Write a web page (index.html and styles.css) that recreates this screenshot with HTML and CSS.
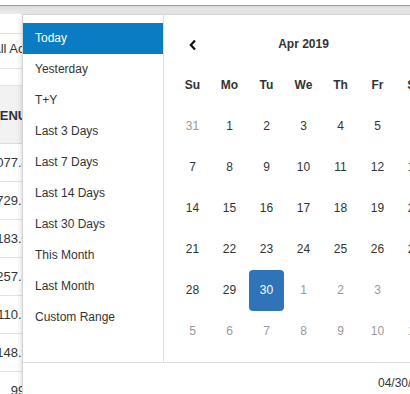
FILE: index.html
```html
<!DOCTYPE html>
<html lang="en">

<head>
    <meta charset="UTF-8">
    <title>Date Range</title>
    <link rel="stylesheet" href="styles.css">
</head>

<body>
    <div class="topbar"></div>

    <div class="page">
        <div class="row-top"></div>
        <div class="row-filter">All Accounts</div>
        <div class="row-gap"></div>
        <div class="row-head">REVENUE</div>
        <div class="row">1077.42</div>
        <div class="row">1729.18</div>
        <div class="row">1183.60</div>
        <div class="row">1257.05</div>
        <div class="row">1110.37</div>
        <div class="row">1148.90</div>
        <div class="row">99.2</div>
    </div>

    <div class="picker">
        <div class="picker-body">
            <ul class="ranges">
                <li class="active">Today</li>
                <li>Yesterday</li>
                <li>T+Y</li>
                <li>Last 3 Days</li>
                <li>Last 7 Days</li>
                <li>Last 14 Days</li>
                <li>Last 30 Days</li>
                <li>This Month</li>
                <li>Last Month</li>
                <li>Custom Range</li>
            </ul>
            <div class="calendar">
                <div class="cal-row">
                    <div class="cell prev">
                        <svg width="10" height="12" viewBox="0 0 10 12">
                            <path d="M7 1.5 L2.8 6 L7 10.5" fill="none" stroke="#111" stroke-width="2.2" />
                        </svg>
                    </div>
                    <div class="month">Apr 2019</div>
                    <div class="cell"></div>
                </div>
                <div class="cal-row week">
                    <div class="cell">Su</div>
                    <div class="cell">Mo</div>
                    <div class="cell">Tu</div>
                    <div class="cell">We</div>
                    <div class="cell">Th</div>
                    <div class="cell">Fr</div>
                    <div class="cell">Sa</div>
                </div>
                <div class="cal-row">
                    <div class="cell off">31</div>
                    <div class="cell">1</div>
                    <div class="cell">2</div>
                    <div class="cell">3</div>
                    <div class="cell">4</div>
                    <div class="cell">5</div>
                    <div class="cell">6</div>
                </div>
                <div class="cal-row">
                    <div class="cell">7</div>
                    <div class="cell">8</div>
                    <div class="cell">9</div>
                    <div class="cell">10</div>
                    <div class="cell">11</div>
                    <div class="cell">12</div>
                    <div class="cell">13</div>
                </div>
                <div class="cal-row">
                    <div class="cell">14</div>
                    <div class="cell">15</div>
                    <div class="cell">16</div>
                    <div class="cell">17</div>
                    <div class="cell">18</div>
                    <div class="cell">19</div>
                    <div class="cell">20</div>
                </div>
                <div class="cal-row">
                    <div class="cell">21</div>
                    <div class="cell">22</div>
                    <div class="cell">23</div>
                    <div class="cell">24</div>
                    <div class="cell">25</div>
                    <div class="cell">26</div>
                    <div class="cell">27</div>
                </div>
                <div class="cal-row">
                    <div class="cell">28</div>
                    <div class="cell">29</div>
                    <div class="cell selected">30</div>
                    <div class="cell off">1</div>
                    <div class="cell off">2</div>
                    <div class="cell off">3</div>
                    <div class="cell off">4</div>
                </div>
                <div class="cal-row">
                    <div class="cell off">5</div>
                    <div class="cell off">6</div>
                    <div class="cell off">7</div>
                    <div class="cell off">8</div>
                    <div class="cell off">9</div>
                    <div class="cell off">10</div>
                    <div class="cell off">11</div>
                </div>
            </div>
        </div>
        <div class="picker-footer">04/30/2019 - 04/30/2019</div>
    </div>
</body>

</html>
```

FILE: styles.css
```css
body {
    margin: 0;
    width: 410px;
    height: 394px;
    overflow: hidden;
    position: relative;
    background-color: #fff;
    font-family: "Liberation Sans", Arial, sans-serif;
    color: #333;
}

.topbar {
    height: 5px;
    border-bottom: 1px solid #9a9a9a;
    box-shadow: 0 1px 0 #d8d8d8;
    position: relative;
}

.topbar::after {
    content: "";
    position: absolute;
    left: 0;
    right: 0;
    top: 6px;
    height: 8px;
    background: linear-gradient(#dcdcdc, #ececec);
}

.page {
    margin-left: -36px;
    width: 80px;
    padding-top: 8px;
    font-size: 13px;
}

.row-top {
    height: 19px;
    border-bottom: 1px solid #e2e2e2;
}

.row-filter {
    height: 34px;
    line-height: 30px;
    padding-left: 28px;
    white-space: nowrap;
    border-bottom: 1px solid #e2e2e2;
}

.row-gap {
    height: 16px;
}

.row-head {
    height: 57px;
    line-height: 60px;
    padding-left: 9px;
    font-weight: bold;
    white-space: nowrap;
    background-color: #f2f2f2;
    border-top: 1px solid #e6e6e6;
    border-bottom: 1px solid #dcdcdc;
}

.row {
    height: 37px;
    line-height: 37px;
    text-align: right;
    padding-right: 8px;
    border-bottom: 1px solid #e2e2e2;
}

.picker {
    position: absolute;
    left: 22px;
    top: 14px;
    width: 460px;
    background-color: #fff;
    border: 1px solid #d4d4d4;
    box-shadow: 0 2px 6px rgba(0, 0, 0, 0.18);
    font-size: 12px;
}

.picker-body {
    display: flex;
    border-bottom: 1px solid #ddd;
}

.ranges {
    list-style: none;
    margin: 0;
    padding: 8px 0 0 0;
    width: 140px;
    border-right: 1px solid #ddd;
}

.ranges li {
    height: 31px;
    line-height: 30px;
    padding-left: 12px;
    color: #333;
}

.ranges li.active {
    background-color: #0a7cc4;
    color: #fff;
}

.calendar {
    padding: 9px 0 10px 10px;
}

.cal-row {
    display: flex;
}

.cell {
    width: 37px;
    height: 41px;
    line-height: 41px;
    text-align: center;
    box-sizing: border-box;
}

.prev {
    display: flex;
    align-items: center;
    justify-content: center;
}

.month {
    width: 185px;
    height: 41px;
    line-height: 41px;
    text-align: center;
    font-weight: bold;
}

.week .cell {
    font-weight: bold;
}

.off {
    color: #999;
}

.selected {
    width: 35px;
    margin: 0 1px;
    border-radius: 4px;
    background-color: #2f74b8;
    color: #fff;
}

.picker-footer {
    height: 40px;
    line-height: 40px;
    padding-left: 355px;
    white-space: nowrap;
    color: #333;
}
```
